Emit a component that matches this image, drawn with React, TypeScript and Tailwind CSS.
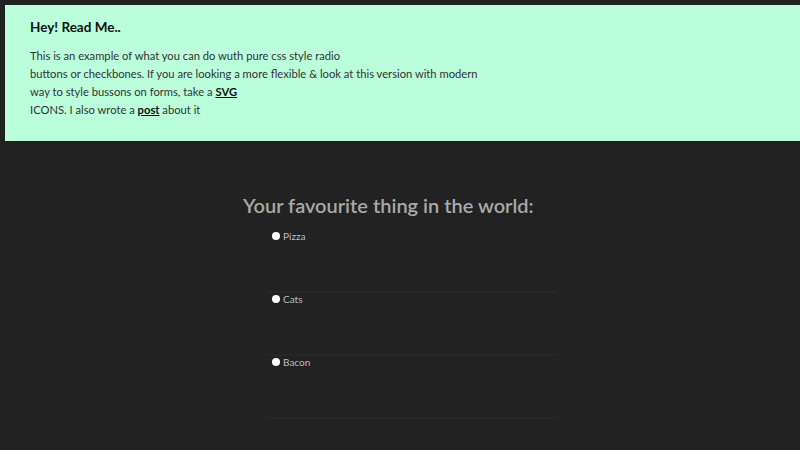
import React from "react";

const options = ["Pizza", "Cats", "Bacon"];

const App: React.FC = () => {
  return (
    <div
      className="min-h-[450px] w-full bg-[#222222] pt-[5px] pl-[5px]"
      style={{ fontFamily: "Lato, 'Open Sans', sans-serif" }}
    >
      <div className="h-[136px] bg-[#bafedc] pl-[25px] pt-[12px] text-[#222]">
        <h2 className="text-[13.5px] font-bold leading-[20px] text-[#111]">Hey! Read Me..</h2>
        <p className="mt-[10px] text-[11.2px] leading-[18px] text-[#333]">
          This is an example of what you can do wuth pure css style radio
          <br />
          buttons or checkbones. If you are looking a more flexible &amp; look at this version with modern
          <br />
          way to style bussons on forms, take a{" "}
          <a href="#" className="font-bold text-[#111] underline">
            SVG
          </a>
          <br />
          ICONS. I also wrote a{" "}
          <a href="#" className="font-bold text-[#111] underline">
            post
          </a>{" "}
          about it
        </p>
      </div>

      <div className="ml-[238px] mt-[51px]">
        <h1 className="text-[20px] font-semibold leading-[26px] text-[#a9a9a9]">Your favourite thing in the world:</h1>
        <ul className="ml-[24px] mt-[12px] w-[290px]">
          {options.map((opt) => (
            <li key={opt} className="h-[63px] border-b-2 border-[#272727]">
              <label className="flex items-center gap-[3px] pl-[5px] text-[10px] leading-[12px] text-[#bdbdbd]">
                <span className="inline-block h-[8px] w-[8px] rounded-full bg-white" />
                {opt}
              </label>
            </li>
          ))}
        </ul>
      </div>
    </div>
  );
};

export default App;
